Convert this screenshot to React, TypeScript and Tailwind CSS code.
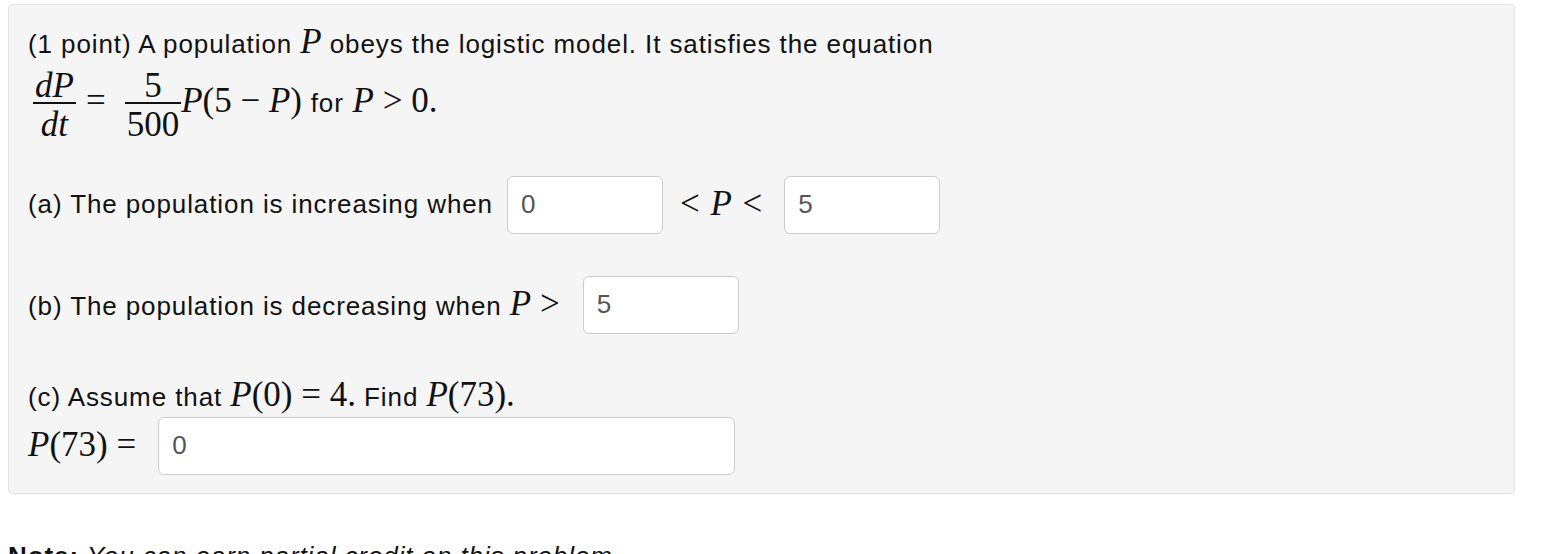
import React from "react";

const sans = "font-['Liberation_Sans',Arial,sans-serif]";
const serif = "font-['Liberation_Serif','Times_New_Roman',serif]";

function Answer({ value, width }: { value: string; width: string }) {
  return (
    <div
      className={`${width} h-[58px] shrink-0 rounded-[6px] border border-[#cccccc] bg-white flex items-center pl-[13px] text-[26px] tracking-[0.6px] text-[#555555] ${sans}`}
    >
      {value}
    </div>
  );
}

function Fraction({
  top,
  bottom,
  className = "",
}: {
  top: React.ReactNode;
  bottom: React.ReactNode;
  className?: string;
}) {
  return (
    <div className={`flex flex-col items-center ${serif} text-[35px] ${className}`}>
      <div className="leading-[32px] px-[2px]">{top}</div>
      <div className="h-[1.5px] w-full bg-[#111111]" />
      <div className="leading-[41px] px-[2px]">{bottom}</div>
    </div>
  );
}

export default function App() {
  return (
    <div
      className={`bg-white w-[1562px] h-[554px] overflow-hidden text-[#111111] text-[26px] tracking-[0.9px] ${sans}`}
    >
      <div className="pt-[4px] px-[8px]">
        <div className="w-[1507px] rounded-[4px] border border-[#e3e3e3] bg-[#f5f5f5] pl-[19px] pt-[24px] pb-[18px]">
          {/* intro */}
          <div className="h-[30px] leading-[30px] whitespace-nowrap">
            (1 point) A population{" "}
            <span className={`${serif} italic text-[35px] leading-[20px] tracking-normal`}>P</span>{" "}
            obeys the logistic model. It satisfies the equation
          </div>

          {/* equation */}
          <div className="flex items-start mt-[11px] tracking-normal">
            <Fraction className="ml-[5px]" top={<i>dP</i>} bottom={<i>dt</i>} />
            <div className={`${serif} text-[35px] leading-[35px] mt-[13px] ml-[10px]`}>=</div>
            <Fraction className="ml-[19px]" top="5" bottom="500" />
            <div className={`${serif} text-[35px] leading-[35px] mt-[13px] whitespace-nowrap`}>
              <i>P</i>(5 − <i>P</i>){" "}
              <span className={`${sans} text-[26px] tracking-[0.9px]`}>for</span> <i>P</i> &gt; 0.
            </div>
          </div>

          {/* (a) */}
          <div className="flex items-center mt-[31px]">
            <span className="whitespace-nowrap">(a) The population is increasing when</span>
            <div className="ml-[14px]">
              <Answer value="0" width="w-[156px]" />
            </div>
            <span className={`${serif} text-[35px] tracking-[1px] ml-[17px] mr-[21px] whitespace-nowrap`}>
              &lt; <i>P</i> &lt;
            </span>
            <Answer value="5" width="w-[156px]" />
          </div>

          {/* (b) */}
          <div className="flex items-center mt-[42px]">
            <span className="whitespace-nowrap">
              (b) The population is decreasing when{" "}
              <span className={`${serif} text-[35px] tracking-normal`}>
                <i>P</i> &gt;
              </span>
            </span>
            <div className="ml-[23px]">
              <Answer value="5" width="w-[156px]" />
            </div>
          </div>

          {/* (c) */}
          <div className="mt-[48px] h-[30px] leading-[30px] whitespace-nowrap">
            (c) Assume that{" "}
            <span className={`${serif} text-[35px] leading-[20px] tracking-normal`}>
              <i>P</i>(0) = 4.
            </span>{" "}
            Find{" "}
            <span className={`${serif} text-[35px] leading-[20px] tracking-normal`}>
              <i>P</i>(73).
            </span>
          </div>
          <div className="flex items-center mt-[5px]">
            <span className={`${serif} text-[35px] tracking-normal whitespace-nowrap`}>
              <i>P</i>(73) =
            </span>
            <div className="ml-[22px]">
              <Answer value="0" width="w-[577px]" />
            </div>
          </div>
        </div>
      </div>

      <div className="px-[8px] mt-[47px] h-[30px] leading-[30px] whitespace-nowrap">
        <b>Note:</b> <i>You can earn partial credit on this problem.</i>
      </div>
    </div>
  );
}
